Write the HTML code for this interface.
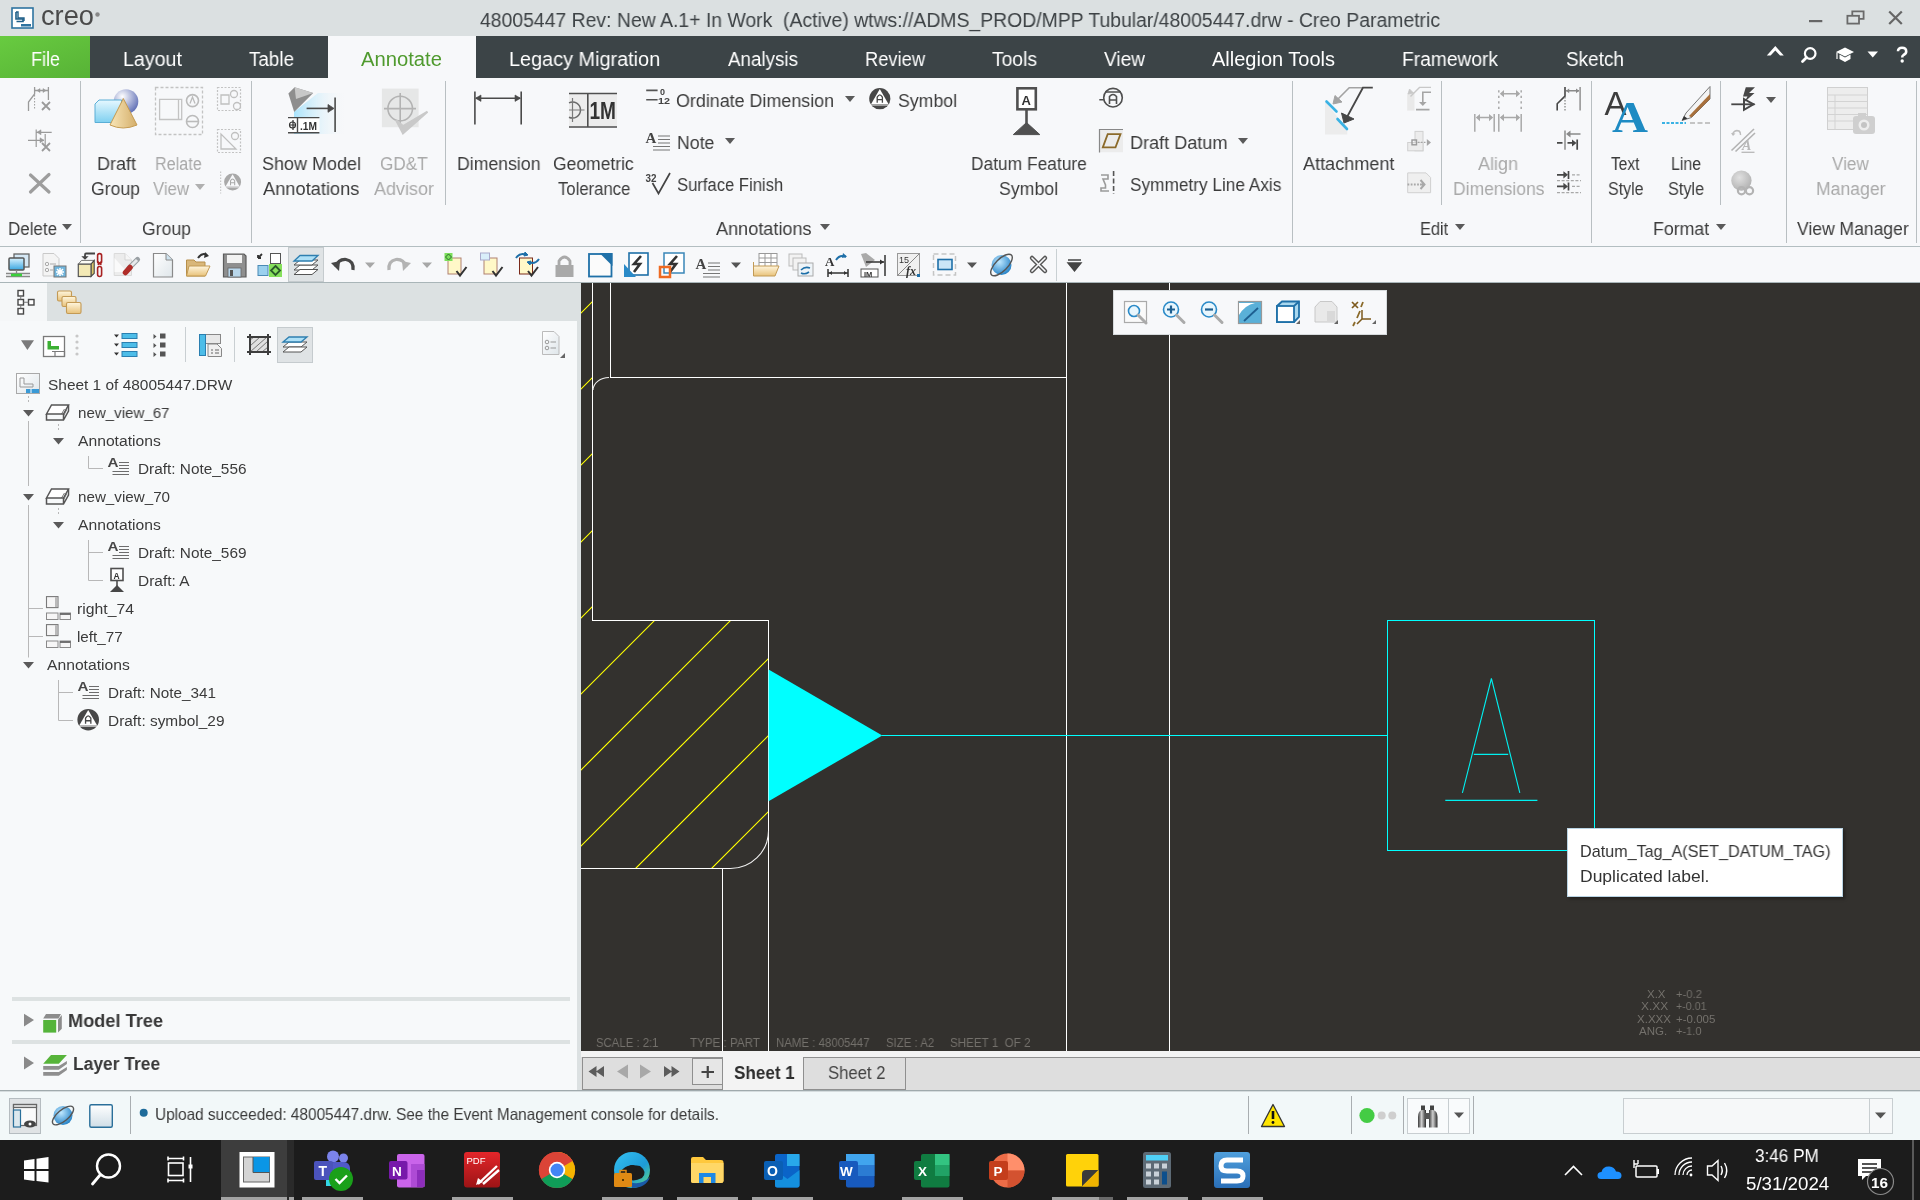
<!DOCTYPE html><html><head><meta charset="utf-8"><style>
html,body{margin:0;padding:0;width:1920px;height:1200px;overflow:hidden;background:#f7f8fa;}
body{position:relative;font-family:"Liberation Sans",sans-serif;}
.t{position:absolute;white-space:pre;line-height:1;transform-origin:0 0;will-change:transform;}
svg{overflow:visible}
</style></head><body>
<div style="position:absolute;left:0px;top:0px;width:1920px;height:36px;background:#dbe0e1;"></div>
<div style="position:absolute;left:0px;top:36px;width:1920px;height:42px;background:#3c4447;"></div>
<div style="position:absolute;left:0px;top:36px;width:90px;height:42px;background:linear-gradient(160deg,#68cb40 0%,#57b236 100%);"></div>
<div style="position:absolute;left:328px;top:36px;width:148px;height:42px;background:#f7f8fa;"></div>
<div style="position:absolute;left:0px;top:78px;width:1920px;height:168px;background:#f7f8fa;"></div>
<div style="position:absolute;left:0px;top:246px;width:1920px;height:1px;background:#b3bec1;"></div>
<div style="position:absolute;left:0px;top:247px;width:1920px;height:35px;background:#f7f8fa;"></div>
<div style="position:absolute;left:0px;top:282px;width:1920px;height:1px;background:#a9b5b8;"></div>
<div style="position:absolute;left:0px;top:283px;width:581px;height:38px;background:#dce1e2;"></div>
<div style="position:absolute;left:0px;top:283px;width:47px;height:38px;background:#f5f7f8;"></div>
<div style="position:absolute;left:0px;top:321px;width:577px;height:769px;background:#f7f9fa;"></div>
<div style="position:absolute;left:577px;top:283px;width:4px;height:807px;background:#dce1e2;"></div>
<div style="position:absolute;left:581px;top:283px;width:1339px;height:768px;background:#33312e;"></div>
<div style="position:absolute;left:581px;top:1051px;width:1339px;height:6px;background:#f3f3f3;"></div>
<div style="position:absolute;left:581px;top:1057px;width:1339px;height:34px;background:#dedede;"></div>
<div style="position:absolute;left:0px;top:1090px;width:1920px;height:50px;background:#f2f8f9;"></div>
<div style="position:absolute;left:0px;top:1140px;width:1920px;height:60px;background:#1c1c1c;"></div>
<span class="t" style="transform:scaleX(0.9695);left:480px;top:10.00px;font-size:20px;color:#3d4245;font-weight:400;">48005447 Rev: New A.1+ In Work  (Active) wtws://ADMS_PROD/MPP Tubular/48005447.drw - Creo Parametric</span>
<span class="t" style="transform:scaleX(0.8997);left:30.5px;top:49.00px;font-size:20px;color:#ffffff;font-weight:400;">File</span>
<span class="t" style="transform:scaleX(0.9823);left:123px;top:49.00px;font-size:20px;color:#ffffff;font-weight:400;">Layout</span>
<span class="t" style="transform:scaleX(0.9412);left:249px;top:49.00px;font-size:20px;color:#ffffff;font-weight:400;">Table</span>
<span class="t" style="transform:scaleX(1.0115);left:361px;top:49.00px;font-size:20px;color:#4f9a2e;font-weight:400;">Annotate</span>
<span class="t" style="transform:scaleX(0.9927);left:509.4px;top:49.00px;font-size:20px;color:#ffffff;font-weight:400;">Legacy Migration</span>
<span class="t" style="transform:scaleX(0.9398);left:728px;top:49.00px;font-size:20px;color:#ffffff;font-weight:400;">Analysis</span>
<span class="t" style="transform:scaleX(0.9149);left:865px;top:49.00px;font-size:20px;color:#ffffff;font-weight:400;">Review</span>
<span class="t" style="transform:scaleX(0.9635);left:992px;top:49.00px;font-size:20px;color:#ffffff;font-weight:400;">Tools</span>
<span class="t" style="transform:scaleX(0.9535);left:1104px;top:49.00px;font-size:20px;color:#ffffff;font-weight:400;">View</span>
<span class="t" style="transform:scaleX(0.9996);left:1212px;top:49.00px;font-size:20px;color:#ffffff;font-weight:400;">Allegion Tools</span>
<span class="t" style="transform:scaleX(0.9599);left:1402px;top:49.00px;font-size:20px;color:#ffffff;font-weight:400;">Framework</span>
<span class="t" style="transform:scaleX(0.9484);left:1566px;top:49.00px;font-size:20px;color:#ffffff;font-weight:400;">Sketch</span>
<svg style="position:absolute;left:11px;top:7px;" width="23" height="22" viewBox="0 0 23 22"><rect x="1" y="1" width="21" height="20" fill="#fff" stroke="#2e73a0" stroke-width="1.6"/><path d="M5 5 V12 H12 V14.5 H5.5" fill="none" stroke="#1f5f88" stroke-width="1.6"/><path d="M5 5 H7 V11 H13 V14" fill="none" stroke="#1f5f88" stroke-width="1.4"/><rect x="10" y="17" width="10" height="2.5" fill="#2e73a0"/></svg>
<span class="t" style="transform:scaleX(1.0089);left:41px;top:3.05px;font-size:27px;color:#4a4a4a;font-weight:400;">creo</span>
<svg style="position:absolute;left:95px;top:12px;" width="5" height="5" viewBox="0 0 5 5"><circle cx="2.5" cy="2.5" r="2.2" fill="#888"/></svg>
<svg style="position:absolute;left:1808px;top:10px;" width="16" height="16" viewBox="0 0 16 16"><rect x="1" y="10" width="13.3" height="2.2" fill="#666"/></svg>
<svg style="position:absolute;left:1846px;top:10px;" width="20" height="16" viewBox="0 0 20 16"><rect x="1.4" y="5.8" width="11.6" height="7.8" fill="none" stroke="#6a6a6a" stroke-width="1.8"/><path d="M6.3 5.8 V1.4 H17.6 V8.8 H13" fill="none" stroke="#6a6a6a" stroke-width="1.8"/></svg>
<svg style="position:absolute;left:1886px;top:10px;" width="18" height="16" viewBox="0 0 18 16"><path d="M3.2 1.5 L15.8 14 M15.8 1.5 L3.2 14" stroke="#666" stroke-width="2.2"/></svg>
<svg style="position:absolute;left:1764px;top:44px;" width="22" height="14" viewBox="0 0 22 14"><path d="M2.8 11.5 L11.3 2 L19.8 11.5 H16 L11.3 6.5 L6.6 11.5 Z" fill="#fff"/></svg>
<svg style="position:absolute;left:1799px;top:46px;" width="20" height="20" viewBox="0 0 20 20"><circle cx="11.2" cy="7.5" r="5.3" fill="none" stroke="#fff" stroke-width="2.2"/><path d="M7.5 11.5 L3.5 15.5" stroke="#fff" stroke-width="2.8" stroke-linecap="round"/></svg>
<svg style="position:absolute;left:1835px;top:46px;" width="22" height="18" viewBox="0 0 22 18"><path d="M1 6 L10 1.5 L19 6 L10 10.5 Z" fill="#fff"/><path d="M4.5 8.5 V13 L10 16 L15.5 13 V8.5 L10 11.5 Z" fill="#fff"/><path d="M2 6.5 V13" stroke="#fff" stroke-width="1.2"/></svg>
<svg style="position:absolute;left:1867px;top:51px;" width="12" height="8" viewBox="0 0 12 8"><path d="M0.5 0.5 H11 L5.75 6.5 Z" fill="#fff"/></svg>
<svg style="position:absolute;left:1895px;top:46px;" width="14" height="18" viewBox="0 0 14 18"><path d="M3 5.2 Q3 1.8 7 1.8 Q11.2 1.8 11.2 5.5 Q11.2 7.8 8.5 9 Q7.2 9.8 7.2 11.5" fill="none" stroke="#fff" stroke-width="2.6"/><circle cx="7.2" cy="15" r="1.7" fill="#fff"/></svg>
<div style="position:absolute;left:80px;top:81px;width:1px;height:162px;background:#b9bfc2;"></div>
<div style="position:absolute;left:251px;top:81px;width:1px;height:162px;background:#b9bfc2;"></div>
<div style="position:absolute;left:445px;top:81px;width:1px;height:124px;background:#b9bfc2;"></div>
<div style="position:absolute;left:1292px;top:81px;width:1px;height:162px;background:#b9bfc2;"></div>
<div style="position:absolute;left:1441px;top:81px;width:1px;height:124px;background:#b9bfc2;"></div>
<div style="position:absolute;left:1591px;top:81px;width:1px;height:162px;background:#b9bfc2;"></div>
<div style="position:absolute;left:1720px;top:81px;width:1px;height:124px;background:#b9bfc2;"></div>
<div style="position:absolute;left:1786px;top:81px;width:1px;height:162px;background:#b9bfc2;"></div>
<div style="position:absolute;left:1916px;top:81px;width:1px;height:162px;background:#b9bfc2;"></div>
<span class="t" style="transform:scaleX(0.9069);left:8px;top:219.60px;font-size:18.7px;color:#3b3b3b;font-weight:400;">Delete</span>
<svg style="position:absolute;left:62px;top:224px;" width="10" height="7" viewBox="0 0 10 7"><path d="M0 0 H10 L5.0 6 Z" fill="#5a5a5a"/></svg>
<span class="t" style="transform:scaleX(0.9432);left:142px;top:219.60px;font-size:18.7px;color:#3b3b3b;font-weight:400;">Group</span>
<span class="t" style="transform:scaleX(0.9686);left:715.6px;top:219.60px;font-size:18.7px;color:#3b3b3b;font-weight:400;">Annotations</span>
<svg style="position:absolute;left:819.6px;top:224px;" width="10" height="7" viewBox="0 0 10 7"><path d="M0 0 H10 L5.0 6 Z" fill="#5a5a5a"/></svg>
<span class="t" style="transform:scaleX(0.8757);left:1419.8px;top:219.60px;font-size:18.7px;color:#3b3b3b;font-weight:400;">Edit</span>
<svg style="position:absolute;left:1455px;top:224px;" width="10" height="7" viewBox="0 0 10 7"><path d="M0 0 H10 L5.0 6 Z" fill="#5a5a5a"/></svg>
<span class="t" style="transform:scaleX(0.9495);left:1652.5px;top:219.60px;font-size:18.7px;color:#3b3b3b;font-weight:400;">Format</span>
<svg style="position:absolute;left:1716px;top:224px;" width="10" height="7" viewBox="0 0 10 7"><path d="M0 0 H10 L5.0 6 Z" fill="#5a5a5a"/></svg>
<span class="t" style="transform:scaleX(0.9377);left:1797px;top:219.60px;font-size:18.7px;color:#3b3b3b;font-weight:400;">View Manager</span>
<span class="t" style="transform:scaleX(0.9630);left:96.5px;top:155.10px;font-size:18.7px;color:#3b3b3b;font-weight:400;">Draft</span>
<span class="t" style="transform:scaleX(0.9432);left:91px;top:179.80px;font-size:18.7px;color:#3b3b3b;font-weight:400;">Group</span>
<span class="t" style="transform:scaleX(0.8643);left:155px;top:155.10px;font-size:18.7px;color:#a9a9a9;font-weight:400;">Relate</span>
<span class="t" style="transform:scaleX(0.8961);left:153px;top:179.80px;font-size:18.7px;color:#a9a9a9;font-weight:400;">View</span>
<svg style="position:absolute;left:195px;top:184px;" width="10" height="7" viewBox="0 0 10 7"><path d="M0 0 H10 L5.0 6 Z" fill="#b0b0b0"/></svg>
<span class="t" style="transform:scaleX(0.9626);left:262.3px;top:155.10px;font-size:18.7px;color:#3b3b3b;font-weight:400;">Show Model</span>
<span class="t" style="transform:scaleX(0.9767);left:263px;top:179.80px;font-size:18.7px;color:#3b3b3b;font-weight:400;">Annotations</span>
<span class="t" style="transform:scaleX(0.9168);left:380px;top:155.10px;font-size:18.7px;color:#a9a9a9;font-weight:400;">GD&amp;T</span>
<span class="t" style="transform:scaleX(0.9626);left:374px;top:179.80px;font-size:18.7px;color:#a9a9a9;font-weight:400;">Advisor</span>
<span class="t" style="transform:scaleX(0.9457);left:456.9px;top:155.10px;font-size:18.7px;color:#3b3b3b;font-weight:400;">Dimension</span>
<span class="t" style="transform:scaleX(0.9362);left:553.3px;top:155.10px;font-size:18.7px;color:#3b3b3b;font-weight:400;">Geometric</span>
<span class="t" style="transform:scaleX(0.8922);left:557.5px;top:179.80px;font-size:18.7px;color:#3b3b3b;font-weight:400;">Tolerance</span>
<span class="t" style="transform:scaleX(0.9573);left:676.2px;top:92.41px;font-size:18.7px;color:#3b3b3b;font-weight:400;">Ordinate Dimension</span>
<svg style="position:absolute;left:845px;top:96px;" width="10" height="7" viewBox="0 0 10 7"><path d="M0 0 H10 L5.0 6 Z" fill="#5a5a5a"/></svg>
<span class="t" style="transform:scaleX(0.9466);left:898.4px;top:92.41px;font-size:18.7px;color:#3b3b3b;font-weight:400;">Symbol</span>
<span class="t" style="transform:scaleX(0.9472);left:676.8px;top:134.10px;font-size:18.7px;color:#3b3b3b;font-weight:400;">Note</span>
<svg style="position:absolute;left:725.4px;top:138px;" width="10" height="7" viewBox="0 0 10 7"><path d="M0 0 H10 L5.0 6 Z" fill="#5a5a5a"/></svg>
<span class="t" style="transform:scaleX(0.8891);left:676.8px;top:176.10px;font-size:18.7px;color:#3b3b3b;font-weight:400;">Surface Finish</span>
<span class="t" style="transform:scaleX(0.9291);left:970.7px;top:155.10px;font-size:18.7px;color:#3b3b3b;font-weight:400;">Datum Feature</span>
<span class="t" style="transform:scaleX(0.9482);left:998.5px;top:179.80px;font-size:18.7px;color:#3b3b3b;font-weight:400;">Symbol</span>
<span class="t" style="transform:scaleX(0.9669);left:1129.6px;top:134.10px;font-size:18.7px;color:#3b3b3b;font-weight:400;">Draft Datum</span>
<svg style="position:absolute;left:1238.4px;top:138px;" width="10" height="7" viewBox="0 0 10 7"><path d="M0 0 H10 L5.0 6 Z" fill="#5a5a5a"/></svg>
<span class="t" style="transform:scaleX(0.9226);left:1129.6px;top:176.10px;font-size:18.7px;color:#3b3b3b;font-weight:400;">Symmetry Line Axis</span>
<span class="t" style="transform:scaleX(0.9679);left:1303px;top:155.10px;font-size:18.7px;color:#3b3b3b;font-weight:400;">Attachment</span>
<span class="t" style="transform:scaleX(0.9624);left:1478px;top:155.10px;font-size:18.7px;color:#a9a9a9;font-weight:400;">Align</span>
<span class="t" style="transform:scaleX(0.9371);left:1452.5px;top:179.80px;font-size:18.7px;color:#a9a9a9;font-weight:400;">Dimensions</span>
<span class="t" style="transform:scaleX(0.8314);left:1610.75px;top:155.10px;font-size:18.7px;color:#3b3b3b;font-weight:400;">Text</span>
<span class="t" style="transform:scaleX(0.8545);left:1607.5px;top:179.80px;font-size:18.7px;color:#3b3b3b;font-weight:400;">Style</span>
<span class="t" style="transform:scaleX(0.8488);left:1670.5px;top:155.10px;font-size:18.7px;color:#3b3b3b;font-weight:400;">Line</span>
<span class="t" style="transform:scaleX(0.8665);left:1667.5px;top:179.80px;font-size:18.7px;color:#3b3b3b;font-weight:400;">Style</span>
<span class="t" style="transform:scaleX(0.9136);left:1832px;top:155.10px;font-size:18.7px;color:#a9a9a9;font-weight:400;">View</span>
<span class="t" style="transform:scaleX(0.9422);left:1816.25px;top:179.80px;font-size:18.7px;color:#a9a9a9;font-weight:400;">Manager</span>
<svg style="position:absolute;left:1766px;top:97px;" width="10" height="7" viewBox="0 0 10 7"><path d="M0 0 H10 L5.0 6 Z" fill="#5a5a5a"/></svg>
<svg style="position:absolute;left:0;top:0" width="1920" height="1200"><path d="M28.5 111 V102 L34.6 94 V87 M48.4 87 V100 M34.6 90.5 H48.4" stroke="#9a9a9a" fill="none" stroke-width="1.3" /><path d="M34.6 95 V110" stroke="#9a9a9a" fill="none" stroke-width="1" stroke-dasharray="1.5 1.5"/><path d="M37 90.5 l3 -2 v4z M46 90.5 l-3 -2 v4z" stroke="#9a9a9a" fill="#9a9a9a" stroke-width="0.5" /><path d="M42 102 L50 110 M50 102 L42 110" stroke="#9a9a9a" fill="none" stroke-width="1.8" /><path d="M36.2 129.5 V147 M36.2 132.3 H51.7 M28 140.3 H44 M45.2 134 V146" stroke="#9a9a9a" fill="none" stroke-width="1.2" /><path d="M37 132.3 l4 -2.5 v5z M44 140.3 l-4 -2.5 v5z" stroke="#9a9a9a" fill="#9a9a9a" stroke-width="0.5" /><path d="M42 143 L50 151 M50 143 L42 151" stroke="#9a9a9a" fill="none" stroke-width="1.8" /><path d="M30.5 175 L49 192 M49 174.5 L30.5 192" stroke="#9d9d9d" fill="none" stroke-width="3.2" stroke-linecap="round"/><defs><linearGradient id="gbox" x1="0" y1="0" x2="0" y2="1"><stop offset="0" stop-color="#e6f8ff"/><stop offset="1" stop-color="#7fd0f0"/></linearGradient><radialGradient id="gsph" cx="0.35" cy="0.3" r="0.8"><stop offset="0" stop-color="#ffffff"/><stop offset="1" stop-color="#5565b0"/></radialGradient><linearGradient id="gcone" x1="0" y1="0" x2="1" y2="0"><stop offset="0" stop-color="#f8e6b8"/><stop offset="1" stop-color="#d4ae6a"/></linearGradient><linearGradient id="gbeam" x1="0" y1="0" x2="1" y2="0"><stop offset="0" stop-color="#9fe0fb"/><stop offset="1" stop-color="#f7f8fa" stop-opacity="0"/></linearGradient></defs><circle cx="126" cy="101.5" r="12.3" fill="url(#gsph)"/><path d="M95 104 L99 100 H121.5 V122.5 H95 Z" fill="url(#gbox)" stroke="#5aaed6" stroke-width="1"/><path d="M123.3 98.5 L137 125 Q123 131 110 125 Z" fill="url(#gcone)" stroke="#c49a50" stroke-width="1"/><path d="M155.5 87.5 H202.5 V134.5 H155.5 Z" stroke="#c3c3c3" fill="none" stroke-width="1.3" stroke-dasharray="3 2"/><path d="M159.6 99.4 H181.7 V119.5 H159.6 Z M178.5 100 V119" stroke="#c3c3c3" fill="none" stroke-width="1.3" /><circle cx="192.5" cy="100.6" r="6" fill="none" stroke="#bbb" stroke-width="1.6"/><circle cx="192.5" cy="121.5" r="6" fill="none" stroke="#bbb" stroke-width="1.6"/><path d="M187 121.5 H198" stroke="#bbb" stroke-width="1.6"/><path d="M190 103.5 L192.5 97 L195 103.5" stroke="#bbb" fill="none" stroke-width="1.3"/><path d="M217.5 87.5 H240.5 V110.5 H217.5 Z M217.5 129.5 H240.5 V152.5 H217.5 Z" stroke="#c3c3c3" fill="none" stroke-width="1.2" stroke-dasharray="2 1.5"/><path d="M221 95 H229 V104 H221 Z M221 134 V149 H236 Z" stroke="#c0c0c0" fill="none" stroke-width="1.3" /><circle cx="234" cy="94" r="3.5" fill="none" stroke="#c0c0c0" stroke-width="1.3"/><circle cx="237" cy="106" r="3.5" fill="none" stroke="#c0c0c0" stroke-width="1.3"/><circle cx="235" cy="136" r="3.5" fill="none" stroke="#c0c0c0" stroke-width="1.3"/><path d="M220.7 171.5 V193.5" stroke="#bdbdbd" fill="none" stroke-width="1" stroke-dasharray="1.5 1.5"/><circle cx="232.6" cy="182" r="8.5" fill="#a9a9a9"/><path d="M232.6 174.30188679245282 L239.6566037735849 186.49056603773585 H225.5433962264151 Z" fill="#f7f8fa"/><path d="M224.18018867924528 187.1320754716981 H241.0198113207547" stroke="#f7f8fa" stroke-width="0.6415094339622642"/><path d="M230.51509433962264 185.20754716981133 V180.79716981132074 Q232.6 177.18867924528303 234.68490566037735 180.79716981132074 V185.20754716981133 M230.51509433962264 182.80188679245282 H234.68490566037735" fill="none" stroke="#a9a9a9" stroke-width="1.0424528301886793"/><path d="M294 112 L318 93 L345 93 L345 134 L294 134 Z" fill="url(#gbeam)" opacity="0.9"/><path d="M288.4 93.5 L294.6 87.3 L313.2 93 L294.2 112.1 Z" fill="#8e8e8e"/><path d="M294.6 87.3 L313.2 93 L296 99 Z" fill="#c8c8c8"/><path d="M306.6 108.4 H330" stroke="#4a4a4a" fill="none" stroke-width="1.6" /><path d="M328 104.5 L334 108.4 L328 112.3 Z" stroke="#4a4a4a" fill="#4a4a4a" stroke-width="0.8" /><path d="M335.1 97.5 V132" stroke="#4a4a4a" fill="none" stroke-width="1.6" /><rect x="288.5" y="118" width="31" height="14.5" fill="#fff"/><path d="M288 117.6 H319.4 M288 132.7 H319.4 M297.5 117.6 V132.7" stroke="#4a4a4a" fill="none" stroke-width="1.4" /><text x="300" y="130" font-family="Liberation Sans" font-weight="bold" font-size="11" fill="#333" textLength="17" lengthAdjust="spacingAndGlyphs">.1M</text><path d="M290 125 h6 M293 120 v10" stroke="#333" fill="none" stroke-width="1.2" /><circle cx="292.5" cy="125" r="3" fill="none" stroke="#333" stroke-width="1.2"/><rect x="381.9" y="88.6" width="36.7" height="38.6" fill="#e6e7e7"/><circle cx="400.2" cy="108.6" r="12.3" fill="none" stroke="#b3b3b3" stroke-width="1.6"/><path d="M384 108.6 H416 M400.2 93 V124" stroke="#b3b3b3" fill="none" stroke-width="1.6" /><path d="M396 120 L403 133.4 L427.5 111.7 L403 126 Z" stroke="#c9c9c9" fill="#c9c9c9" stroke-width="2" /><path d="M474.9 91.5 V124.6 M521.2 91.5 V124.6 M476 98.2 H520" stroke="#4a4a4a" fill="none" stroke-width="1.6" /><path d="M475.5 98.2 L481 95 V101.4 Z M520.5 98.2 L515 95 V101.4 Z" stroke="#4a4a4a" fill="#4a4a4a" stroke-width="0.6" /><rect x="569" y="93" width="48" height="34.4" fill="#ececec"/><path d="M569 93.5 H617 M569 127 H617 M587.8 93 V127.4" stroke="#4f4f4f" fill="none" stroke-width="1.6" /><text x="589.5" y="118.6" font-family="Liberation Sans" font-weight="bold" font-size="23" fill="#333" textLength="26.5" lengthAdjust="spacingAndGlyphs">1M</text><path d="M569 102.8 A8 8 0 1 1 569 117.2" stroke="#6a6a6a" fill="none" stroke-width="1.5" /><path d="M572.5 98 V122 M569 110 H584.5" stroke="#7a7a7a" fill="none" stroke-width="1.2" /><path d="M646.2 90.4 H657.6 M646.2 99.7 H657.6" stroke="#555" fill="none" stroke-width="1.6" /><text x="660" y="95" font-family="Liberation Sans" font-weight="bold" font-size="9" fill="#444">0</text><text x="658" y="104" font-family="Liberation Sans" font-weight="bold" font-size="9" fill="#444" textLength="12" lengthAdjust="spacingAndGlyphs">12</text><text x="645.5" y="143" font-family="Liberation Serif" font-weight="bold" font-size="15" fill="#444">A</text><path d="M658 136 H670 M658 139.5 H670 M658 143 H670 M653 146.5 H670 M653 150 H670" stroke="#777" fill="none" stroke-width="1.2" /><text x="645.5" y="182" font-family="Liberation Sans" font-weight="bold" font-size="10" fill="#444" textLength="11" lengthAdjust="spacingAndGlyphs">32</text><path d="M652.5 183 L658.5 193.5 L670 173" stroke="#444" fill="none" stroke-width="1.7" /><circle cx="879.8" cy="98.7" r="10.6" fill="#474747"/><path d="M879.8 89.10000000000001 L888.5999999999999 104.3 H871.0 Z" fill="#fff"/><path d="M869.3 105.10000000000001 H890.3" stroke="#fff" stroke-width="0.8"/><path d="M877.1999999999999 102.7 V97.2 Q879.8 92.7 882.4 97.2 V102.7 M877.1999999999999 99.7 H882.4" fill="none" stroke="#474747" stroke-width="1.3"/><rect x="1017.4" y="88.3" width="18.4" height="21" fill="#fff" stroke="#505050" stroke-width="2.6"/><text x="1021.5" y="105" font-family="Liberation Sans" font-weight="bold" font-size="13" fill="#333">A</text><path d="M1026.5 110 V124" stroke="#505050" fill="none" stroke-width="2.6" /><path d="M1013.3 134.6 L1026.5 122.5 L1039.8 134.6 Z" stroke="#505050" fill="#505050" stroke-width="1" /><circle cx="1113" cy="97.7" r="9.3" fill="none" stroke="#4f4f4f" stroke-width="1.6"/><path d="M1099.3 99.7 H1104 M1105 92 H1121" stroke="#4f4f4f" fill="none" stroke-width="1.5" /><path d="M1109.5 104 V96.5 Q1113 92.5 1116.5 96.5 V104 M1109.5 100 H1116.5" stroke="#4f4f4f" fill="none" stroke-width="1.6" /><rect x="1099" y="129.2" width="24" height="23" fill="#ececec"/><path d="M1099.5 152.5 V129.5 H1123" stroke="#888" fill="none" stroke-width="1.2" /><path d="M1102.8 147.4 L1107.7 134.1 L1120.5 134.1 L1115.5 147.4 Z" stroke="#8b6a2a" fill="none" stroke-width="1.8" /><path d="M1101 175 H1108 V179 H1103 L1105.5 185 V188 H1101 V191 H1109" stroke="#9a9a9a" fill="none" stroke-width="1.6" /><path d="M1113.6 171 V194" stroke="#555" fill="none" stroke-width="1.6" stroke-dasharray="5 2.5"/><path d="M1325 100.7 L1347.2 129.7 V134.6 H1325 Z" fill="#ececec"/><path d="M1326.5 101.5 L1336.5 111.5 M1337.5 119 L1347 129" stroke="#3ab2e4" fill="none" stroke-width="2.6" stroke-linecap="round"/><path d="M1363 87.7 H1349.2 L1337 100" stroke="#a3a3a3" fill="none" stroke-width="1.6" /><path d="M1333 104 L1335 95.5 L1342 102 Z" stroke="#a3a3a3" fill="#a3a3a3" stroke-width="1" /><path d="M1372.8 87.7 H1362.9 L1346.5 118" stroke="#474747" fill="none" stroke-width="1.8" /><path d="M1341.5 113 L1344 123 L1354 119 Z" stroke="#474747" fill="#474747" stroke-width="1" /><rect x="1407.2" y="93.2" width="7.3" height="17.4" fill="#e9e9e9"/><path d="M1431 87.4 H1419.5 L1410.5 96.5" stroke="#c8c8c8" fill="none" stroke-width="1.4" /><path d="M1408 94 L1409.5 89 L1413.5 93 Z" stroke="#c8c8c8" fill="#c8c8c8" stroke-width="0.8" /><path d="M1431 92.2 H1422.8 V102 M1416 109.6 H1429.5" stroke="#a5a5a5" fill="none" stroke-width="1.6" /><path d="M1419 102 H1426.6 L1422.8 106 Z" stroke="none" fill="#a5a5a5" stroke-width="0" /><rect x="1415" y="131.4" width="8" height="19.4" fill="#ececec" stroke="#d0d0d0"/><rect x="1407.7" y="142.5" width="15.3" height="8.3" fill="#ececec" stroke="#d0d0d0"/><rect x="1412" y="140" width="4.5" height="4.8" fill="none" stroke="#9a9a9a" stroke-width="1.4"/><path d="M1418 142.4 H1427" stroke="#a5a5a5" fill="none" stroke-width="1.3" stroke-dasharray="1.5 1.5"/><path d="M1431 142.4 l-4.2 -3.5 v7z" stroke="none" fill="#a5a5a5" stroke-width="0" /><path d="M1407.7 172.9 H1426 L1430.6 177.5 V192.7 H1407.7 Z" fill="#efefef" stroke="#d0d0d0"/><path d="M1407.5 184.5 H1420" stroke="#a8a8a8" fill="none" stroke-width="1.8" stroke-dasharray="1.8 1.4"/><path d="M1420 184.5 H1424 M1420.5 180 L1424.5 184.5 L1420.5 189" stroke="#a8a8a8" fill="none" stroke-width="2" /><path d="M1474.8 114 V131.7 M1494.2 114 V131.7 M1498.8 114 V131.7 M1521.2 114 V131.7 M1477 117.6 H1492 M1501 117.6 H1519 M1501 93.7 H1519" stroke="#a9a9a9" fill="none" stroke-width="1.5" /><path d="M1498.8 90.3 V111 M1521.2 90.3 V111" stroke="#a9a9a9" fill="none" stroke-width="1.5" stroke-dasharray="2.2 3.3"/><path d="M1475.8 117.6 l4.2 -3.6 v7.2z M1493.2 117.6 l-4.2 -3.6 v7.2z M1499.8 117.6 l4.2 -3.6 v7.2z M1520.2 117.6 l-4.2 -3.6 v7.2z M1499.8 93.7 l4.2 -3.6 v7.2z M1520.2 93.7 l-4.2 -3.6 v7.2z" stroke="none" fill="#a9a9a9" stroke-width="0" /><path d="M1557.2 110.6 V103.8 L1565 96.1 V86.9" stroke="#474747" fill="none" stroke-width="1.6" /><path d="M1565 97 V110.6" stroke="#888" fill="none" stroke-width="1.3" stroke-dasharray="1.6 1.4"/><path d="M1580.1 86.9 V110.6 M1566 90.8 H1579" stroke="#8a8a8a" fill="none" stroke-width="1.4" /><path d="M1566 90.8 l3.2 -2.4 v4.8z M1579.2 90.8 l-3.2 -2.4 v4.8z" stroke="none" fill="#8a8a8a" stroke-width="0" /><path d="M1565 130.4 V149.7 M1580.5 134 H1568" stroke="#8a8a8a" fill="none" stroke-width="1.5" /><path d="M1566 134 l4.5 -3.4 v6.8z" stroke="none" fill="#8a8a8a" stroke-width="0" /><path d="M1557 142.9 H1562.5 M1567.5 142.9 H1574 M1577.2 139.6 V149.7" stroke="#474747" fill="none" stroke-width="1.7" /><path d="M1576.6 142.9 l-4.6 -3.5 v7z" stroke="none" fill="#474747" stroke-width="0" /><path d="M1557 174.8 H1564 M1557 186.4 H1564 M1568.5 171 V179 M1568.5 182.6 V190.6" stroke="#474747" fill="none" stroke-width="1.7" /><path d="M1568 174.8 l-4.6 -3.6 v7.2z M1568 186.4 l-4.6 -3.6 v7.2z" stroke="none" fill="#474747" stroke-width="0" /><path d="M1572 174.8 H1581 M1572 186.4 H1581 M1557 180.6 H1581 M1557 192.7 H1581" stroke="#a8a8a8" fill="none" stroke-width="1.3" stroke-dasharray="3 1.6"/><text x="1604.5" y="114.6" font-family="Liberation Sans" font-size="34" fill="#3d3d3d" textLength="22" lengthAdjust="spacingAndGlyphs">A</text><text x="1612" y="131.5" font-family="Liberation Serif" font-weight="bold" font-size="44" fill="#1e8bc3" textLength="36" lengthAdjust="spacingAndGlyphs">A</text><path d="M1662 123 H1686" stroke="#3ab2e4" fill="none" stroke-width="2.2" stroke-dasharray="3 1.5"/><path d="M1690 123 H1710" stroke="#c4c4c4" fill="none" stroke-width="2.2" stroke-dasharray="5 2.5"/><path d="M1682 120.5 L1686 113 L1710 86.5 V99 L1691.5 117.5 Z" fill="#f4f4f4" stroke="#777" stroke-width="1"/><path d="M1691.5 117.5 L1710 99 V94 L1689 116 Z" fill="#a8703c"/><path d="M1682 120.5 L1684 116 L1687.5 118.5 Z" fill="#333"/><path d="M1731.3 104.3 H1754.5" stroke="#474747" fill="none" stroke-width="1.8" /><path d="M1744 99 L1753.5 104.3 L1744 109.8 Z" stroke="#474747" fill="none" stroke-width="2" /><path d="M1745.8 87.2 H1755 L1749 93 H1754.5 L1744 102.5 L1747.5 96.5 H1743 Z" stroke="none" fill="#474747" stroke-width="0" /><path d="M1731.5 150.5 L1754 129 M1735.5 151.5 L1755 133" stroke="#b3b3b3" fill="none" stroke-width="1.6" /><text x="1742" y="150" font-family="Liberation Serif" font-style="italic" font-weight="bold" font-size="14" fill="#b8b8b8">A</text><path d="M1741.5 152.3 H1754.5" stroke="#b8b8b8" fill="none" stroke-width="1.3" /><path d="M1732.5 134.5 Q1734 129.5 1739 131 Q1741 132.5 1740.5 135" stroke="#bdbdbd" fill="none" stroke-width="1.6" /><path d="M1731 133 L1733 136 L1735.5 133.5 Z" stroke="none" fill="#bdbdbd" stroke-width="0" /><defs><radialGradient id="gsph2" cx="0.4" cy="0.35" r="0.7"><stop offset="0" stop-color="#e0e0e0"/><stop offset="1" stop-color="#b0b0b0"/></radialGradient></defs><circle cx="1741.4" cy="180.6" r="10.2" fill="url(#gsph2)"/><circle cx="1741.5" cy="190.8" r="3.6" fill="none" stroke="#b3b3b3" stroke-width="2.2"/><circle cx="1749.5" cy="190.8" r="3.6" fill="none" stroke="#b3b3b3" stroke-width="2.2"/><rect x="1827.5" y="87.5" width="40" height="42" fill="#ededed" stroke="#d0d0d0"/><path d="M1827.5 95 H1867.5 M1827.5 101.5 H1867.5 M1827.5 108 H1867.5 M1827.5 114.5 H1867.5 M1827.5 121 H1867.5 M1835 95 V129.5" stroke="#d3d3d3" fill="none" stroke-width="1" /><rect x="1853" y="116" width="22" height="18" rx="3" fill="#cfcfcf"/><circle cx="1864" cy="125" r="5.5" fill="#ededed"/><circle cx="1864" cy="125" r="3" fill="#c4c4c4"/><rect x="1858" y="113" width="8" height="4" fill="#cfcfcf"/></svg>
<div style="position:absolute;left:288px;top:247px;width:36px;height:35px;background:#dfe3e5;border:1px solid #c5cbce;box-sizing:border-box"></div>
<div style="position:absolute;left:1056px;top:249px;width:1px;height:32px;background:#c9d0d3;"></div>
<svg style="position:absolute;left:0;top:0" width="1920" height="1200"><defs><linearGradient id="gscr" x1="0" y1="0" x2="0" y2="1"><stop offset="0" stop-color="#d8f2ff"/><stop offset="1" stop-color="#3aa6e0"/></linearGradient><linearGradient id="gfold" x1="0" y1="0" x2="0" y2="1"><stop offset="0" stop-color="#fff6de"/><stop offset="1" stop-color="#e8c27a"/></linearGradient><linearGradient id="gdoc" x1="0" y1="0" x2="1" y2="1"><stop offset="0" stop-color="#ffffff"/><stop offset="1" stop-color="#dfe6ea"/></linearGradient><radialGradient id="gglobe" cx="0.4" cy="0.35" r="0.7"><stop offset="0" stop-color="#bfe8ff"/><stop offset="1" stop-color="#1f7fc6"/></radialGradient></defs><rect x="14" y="254" width="15" height="13" fill="#d5e8f5" stroke="#666" stroke-width="1.3"/><rect x="9" y="258" width="15" height="12" rx="1" fill="url(#gscr)" stroke="#555" stroke-width="1.5"/><path d="M16.5 270 V274 M6 273.5 H30 M6 276.5 H30" stroke="#888" stroke-width="1.3"/><path d="M11 275 H22" stroke="#3ad13a" stroke-width="2.6"/><path d="M43 253.5 H54 L59 258.5 V276 H43 Z" fill="#f4f4f4" stroke="#c9c9c9"/><circle cx="47" cy="264" r="1.7" fill="none" stroke="#aaa"/><circle cx="47" cy="270" r="1.7" fill="none" stroke="#aaa"/><path d="M50 264 H56 M50 270 H53" stroke="#aaa"/><rect x="54" y="266" width="12" height="11" fill="#6fb4dc" stroke="#777"/><path d="M57 269 L63 275 M63 269 L57 275 M60 268 V276 M56 272 H64" stroke="#fff" stroke-width="1.5"/><path d="M78.3 264.2 L81.5 260.4 H94.2 L91 264.2 Z" fill="#fbfbf5" stroke="#666" stroke-width="0.9"/><path d="M91 264.2 L94.2 260.4 V273.3 L91 276.5 Z" fill="#d9c66a" stroke="#444" stroke-width="1.1"/><rect x="78.3" y="264.2" width="12.7" height="12.3" fill="#f3e9b5" stroke="#555" stroke-width="1.2"/><path d="M95 253.5 H86 Q85 253.5 85 255 V259" stroke="#444" stroke-width="1.8" fill="none"/><path d="M81.3 256.2 H88.6 L85 259.8 Z" fill="#444"/><rect x="97.6" y="253.6" width="4" height="10" rx="2" fill="none" stroke="#a82222" stroke-width="1.6"/><rect x="97.6" y="266.5" width="4" height="10" rx="2" fill="none" stroke="#a82222" stroke-width="1.6"/><path d="M97.8 261.5 L101.4 265 M101.4 261.5 L97.8 265" stroke="#a82222" stroke-width="1.2"/><path d="M114.2 253.5 H125 L131.5 260 V275.5 H114.2 Z" fill="#ececec" stroke="#dadada"/><path d="M114.5 258 L127 272 H114.5 Z" fill="#fafafa"/><path d="M125 253.5 V260 H131.5" fill="#f6f6f6" stroke="#d5d5d5"/><path d="M137.5 259.5 L129 268" stroke="#9aa0a4" stroke-width="5.2" stroke-linecap="round"/><path d="M137 260 L129.5 267.5" stroke="#e8eaec" stroke-width="3"/><path d="M130 267.5 L125.5 272.5" stroke="#b02c28" stroke-width="5.5" stroke-linecap="round"/><path d="M153.5 253.5 H166 L172.5 260 V277 H153.5 Z" fill="url(#gdoc)" stroke="#8a8a8a" stroke-width="1.2"/><path d="M166 253.5 V260 H172.5" fill="#cfe3ef" stroke="#8a8a8a" stroke-width="1"/><path d="M186.5 260 H194 L196 262 H205 V276 H186.5 Z" fill="#d9b77a" stroke="#b78f4a"/><path d="M189 266 H210 L205.5 276 H186.5 Z" fill="url(#gfold)" stroke="#c29a55"/><path d="M198 258 Q202 252 207 255" stroke="#333" stroke-width="2" fill="none"/><path d="M205 252 L209 256 L204 258 Z" fill="#333"/><path d="M223.5 254 H244 L246 256 V277 H223.5 Z" fill="#8f8f8f" stroke="#5c5c5c" stroke-width="1.2"/><rect x="227" y="255" width="15" height="8" fill="#f2f2f2"/><rect x="228" y="268" width="13" height="9" fill="#b9d6ea" stroke="#666" stroke-width="0.8"/><rect x="230" y="270" width="3" height="6" fill="#555"/><path d="M262 254 L258 258 M258 258 V255 M258 258 H261" stroke="#333" stroke-width="1.8" fill="none"/><rect x="270.5" y="253.5" width="10" height="10" fill="#fff" stroke="#555"/><rect x="258" y="265.5" width="10" height="10" fill="#9ad0ee" stroke="#4a8ab5"/><rect x="269" y="264" width="13" height="13" fill="#86e05c"/><path d="M275.5 266 L280 270.5 L275.5 275 L271 270.5 Z" stroke="#2a5a2a" fill="none" stroke-width="1.8"/><path d="M294 270 L300 265 H318 L312 270 Z" fill="#fff" stroke="#555"/><path d="M294 274.5 L300 269.5 H318 L312 274.5 Z" fill="#fff" stroke="#555"/><path d="M294 265 L300 260 H318 L312 265 Z" fill="#fff" stroke="#555"/><path d="M294 261 L300 255.5 H318 L312 261 Z" fill="#aee0f7" stroke="#2f7fb0" stroke-width="1.3"/><path d="M336 267 Q338 259 346 259.5 Q354 261 353 270" stroke="#474747" stroke-width="3.2" fill="none"/><path d="M331 263 L339 271 L340 261 Z" fill="#474747"/><path d="M365 262.5 H375 L370 268 Z M422 262.5 H432 L427 268 Z" fill="#a7a7a7"/><path d="M406 267 Q404 259 396 259.5 Q388 261 389 270" stroke="#b3b3b3" stroke-width="3.2" fill="none"/><path d="M411 263 L403 271 L402 261 Z" fill="#b3b3b3"/><rect x="448.0" y="258" width="13" height="16" fill="#fff8c8" stroke="#b08070" stroke-width="1"/><path d="M456.5 271 L460.0 275.5 L466.5 267" stroke="#333" stroke-width="2" fill="none"/><rect x="484.0" y="258" width="13" height="16" fill="#fff8c8" stroke="#b08070" stroke-width="1"/><path d="M492.5 271 L496.0 275.5 L502.5 267" stroke="#333" stroke-width="2" fill="none"/><rect x="519.5" y="258" width="13" height="16" fill="#fff8c8" stroke="#7a2a1a" stroke-width="1"/><path d="M528 271 L531.5 275.5 L538 267" stroke="#333" stroke-width="2" fill="none"/><rect x="444.5" y="253" width="8" height="8" fill="#7de05c"/><path d="M448.5 254 L451.5 257 L448.5 260 L445.5 257 Z" stroke="#2a6a2a" fill="none"/><rect x="480.5" y="253" width="9" height="7" fill="#d9eefa" stroke="#aac"/><path d="M516 258 Q520 252 527 255 M539 259 Q535 265 528 262" stroke="#1e6fa8" stroke-width="2" fill="none"/><path d="M525 252 l3 3 l-4 1z M530 265 l-3 -3 l4 -1z" fill="#1e6fa8" stroke="#1e6fa8"/><rect x="555.5" y="265" width="18" height="12" fill="#a9a9a9"/><path d="M559 265 V261 Q564.5 253 570 261 V265" stroke="#a9a9a9" stroke-width="2.8" fill="none"/><rect x="589" y="254" width="22.5" height="22.5" fill="#fbfbfb" stroke="#1f70a8" stroke-width="1.8"/><path d="M599.5 253 H612.5 V266 Z" fill="#1f70a8"/><rect x="629" y="253" width="19" height="22" fill="#fff" stroke="#1f70a8" stroke-width="1.6"/><path d="M624 264 V277 H636 Z" fill="#2a8ac8"/><path d="M641 256 L634 264 H640 L634 272" stroke="#333" stroke-width="2.6" fill="none"/><rect x="664" y="253" width="20" height="20" fill="#fff" stroke="#3a86b8" stroke-width="1.5"/><path d="M677 256 L670 264 H676 L670 272" stroke="#333" stroke-width="2.6" fill="none"/><rect x="660" y="267" width="10" height="10" fill="none" stroke="#ee6a22" stroke-width="2.5"/><text x="695.5" y="269" font-family="Liberation Serif" font-weight="bold" font-size="15" fill="#444">A</text><path d="M708 263 H720 M708 266.5 H720 M708 270 H720 M703 273.5 H720 M703 277 H720" stroke="#777" stroke-width="1.2"/><path d="M731 262.5 H741 L736 268 Z M967 262.5 H977 L972 268 Z" fill="#555"/><rect x="759" y="253.5" width="18" height="14" fill="#fff" stroke="#999"/><path d="M759 258 H777 M759 262.5 H777 M765 253.5 V267 M771 253.5 V267" stroke="#999"/><path d="M753.5 266 H779 L775 276 H753.5 Z" fill="url(#gfold)" stroke="#c29a55"/><path d="M753.5 262 V276" stroke="#c29a55"/><rect x="789" y="254" width="13" height="12" fill="#f2f2f2" stroke="#bbb"/><rect x="793" y="258" width="13" height="12" fill="#f2f2f2" stroke="#bbb"/><rect x="798" y="263" width="15" height="13" fill="#eef4f8" stroke="#aaa"/><path d="M801 270 Q805 266 810 268 M809 272 Q805 275 801 273" stroke="#1e6fa8" stroke-width="1.6" fill="none"/><text x="825" y="266" font-family="Liberation Serif" font-weight="bold" font-size="13" fill="#333">A</text><path d="M836 260 Q840 254 846 257" stroke="#1e6fa8" stroke-width="2" fill="none"/><path d="M843 253 l4 3.5 l-5 1.5z" fill="#1e6fa8"/><path d="M828 273 H848 M828 269 V277 M848 269 V277" stroke="#333" stroke-width="1.5"/><path d="M829 273 l3 -2 v4z M847 273 l-3 -2 v4z" fill="#333"/><path d="M861 254 L866 253 L875 260 L866 267 Z" fill="#aaa"/><path d="M866 262 H884 M885 255 V276" stroke="#333" stroke-width="1.5"/><path d="M884 262 l-4 -2.5 v5z" fill="#333"/><rect x="861" y="269" width="17" height="8" fill="#fff" stroke="#555"/><text x="864" y="276.5" font-family="Liberation Sans" font-weight="bold" font-size="7.5" fill="#333">IM</text><rect x="897.5" y="253.5" width="22" height="22" fill="#f0f0f0" stroke="#999"/><path d="M897.5 275.5 L919.5 253.5" stroke="#888"/><text x="899" y="263" font-family="Liberation Sans" font-size="9" fill="#333">15</text><text x="906" y="275" font-family="Liberation Serif" font-style="italic" font-weight="bold" font-size="12" fill="#333">fx</text><rect x="917" y="274" width="3" height="3" fill="#1f70a8"/><rect x="933.5" y="254" width="22" height="21" fill="none" stroke="#c5c5c5" stroke-width="1.5" stroke-dasharray="5 3"/><rect x="938" y="259.5" width="14" height="10" fill="#cbe6f7" stroke="#1f70a8" stroke-width="1.6"/><circle cx="1001.5" cy="265" r="10" fill="url(#gglobe)"/><ellipse cx="1001.5" cy="265" rx="14" ry="6" transform="rotate(-45 1001.5 265)" fill="none" stroke="#555" stroke-width="1.4"/><path d="M1032 258 L1045 271 M1045 258 L1032 271" stroke="#555" stroke-width="4.5" stroke-linecap="round"/><path d="M1032 258 L1045 271 M1045 258 L1032 271" stroke="#f7f8fa" stroke-width="1.6" stroke-linecap="round"/><path d="M1068 260 H1081 M1068 263 H1081 L1074.5 271 Z" stroke="#444" fill="#444" stroke-width="1.4"/></svg>
<div style="position:absolute;left:277px;top:327px;width:36px;height:36px;background:#dfe3e5;border:1px solid #c5cbce;box-sizing:border-box"></div>
<div style="position:absolute;left:185px;top:327px;width:1px;height:35px;background:#c9cfd2;"></div>
<div style="position:absolute;left:234px;top:327px;width:1px;height:35px;background:#c9cfd2;"></div>
<span class="t" style="transform:scaleX(1.0163);left:47.5px;top:377.08px;font-size:15.2px;color:#3b3b3b;font-weight:400;">Sheet 1 of 48005447.DRW</span>
<span class="t" style="transform:scaleX(0.9942);left:77.5px;top:405.08px;font-size:15.2px;color:#3b3b3b;font-weight:400;">new_view_67</span>
<span class="t" style="transform:scaleX(1.0322);left:77.5px;top:433.08px;font-size:15.2px;color:#3b3b3b;font-weight:400;">Annotations</span>
<span class="t" style="transform:scaleX(1.0119);left:137.8px;top:461.08px;font-size:15.2px;color:#3b3b3b;font-weight:400;">Draft: Note_556</span>
<span class="t" style="transform:scaleX(0.9975);left:77.5px;top:489.08px;font-size:15.2px;color:#3b3b3b;font-weight:400;">new_view_70</span>
<span class="t" style="transform:scaleX(1.0322);left:77.5px;top:517.08px;font-size:15.2px;color:#3b3b3b;font-weight:400;">Annotations</span>
<span class="t" style="transform:scaleX(1.0119);left:137.8px;top:545.08px;font-size:15.2px;color:#3b3b3b;font-weight:400;">Draft: Note_569</span>
<span class="t" style="transform:scaleX(1.0167);left:137.8px;top:573.08px;font-size:15.2px;color:#3b3b3b;font-weight:400;">Draft: A</span>
<span class="t" style="transform:scaleX(1.0384);left:77.4px;top:601.08px;font-size:15.2px;color:#3b3b3b;font-weight:400;">right_74</span>
<span class="t" style="transform:scaleX(0.9976);left:77.4px;top:629.08px;font-size:15.2px;color:#3b3b3b;font-weight:400;">left_77</span>
<span class="t" style="transform:scaleX(1.0322);left:47.3px;top:657.08px;font-size:15.2px;color:#3b3b3b;font-weight:400;">Annotations</span>
<span class="t" style="transform:scaleX(1.0073);left:107.6px;top:685.08px;font-size:15.2px;color:#3b3b3b;font-weight:400;">Draft: Note_341</span>
<span class="t" style="transform:scaleX(1.0148);left:107.6px;top:713.08px;font-size:15.2px;color:#3b3b3b;font-weight:400;">Draft: symbol_29</span>
<div style="position:absolute;left:12px;top:997px;width:558px;height:4px;background:#dde2e2;"></div>
<div style="position:absolute;left:12px;top:1040px;width:558px;height:4px;background:#dde2e2;"></div>
<span class="t" style="transform:scaleX(0.9683);left:67.7px;top:1012.22px;font-size:18.8px;color:#383838;font-weight:700;">Model Tree</span>
<span class="t" style="transform:scaleX(0.9278);left:72.5px;top:1054.72px;font-size:18.8px;color:#383838;font-weight:700;">Layer Tree</span>
<svg style="position:absolute;left:0;top:0" width="1920" height="1200"><g stroke="#474747" stroke-width="1.4" fill="#fff"><rect x="18" y="290.5" width="5.5" height="5.5"/><rect x="18" y="299.5" width="5.5" height="5.5"/><rect x="28.5" y="299.5" width="5.5" height="5.5"/><rect x="18" y="308.5" width="5.5" height="5.5"/></g><path d="M20.75 296 V299.5 M20.75 305 V308.5 M23.5 302.25 H28.5" stroke="#777" stroke-width="1"/><g fill="url(#gfold)" stroke="#c39a55" stroke-width="1.1"><rect x="57.5" y="291" width="14" height="10" rx="1.5"/><rect x="62" y="296.5" width="14" height="10" rx="1.5"/><rect x="66.5" y="302.5" width="14.5" height="11" rx="1.5"/></g><path d="M21 340.3 H34 L27.4 350 Z" fill="#7a7a7a"/><rect x="43.5" y="336.5" width="21" height="20" fill="#fff" stroke="#7a7a7a" stroke-width="1.3"/><path d="M47.5 341 H51 V346 H59 V349.5 H47.5 Z" fill="#3cb034"/><path d="M52 351.5 H64.5 V356.5 M55 351.5 V356.5" stroke="#7a7a7a" fill="none" stroke-width="1.2"/><g fill="#c8c8c8"><circle cx="77" cy="336" r="1.6"/><circle cx="77" cy="342" r="1.6"/><circle cx="77" cy="348" r="1.6"/><circle cx="77" cy="354" r="1.6"/></g><g fill="#4dbde8" stroke="#2a7fb0" stroke-width="1"><rect x="122" y="333.5" width="15" height="5"/><rect x="122" y="342.5" width="15" height="5"/><rect x="122" y="351.5" width="15" height="5"/></g><path d="M114 334.5 h5 l-2.5 3z M114 343.5 h5 l-2.5 3z M114 352.5 h5 l-2.5 3z" fill="#333"/><g fill="#555"><rect x="160" y="333.5" width="5.5" height="5"/><rect x="160" y="342.5" width="5.5" height="5"/><rect x="160" y="351.5" width="5.5" height="5"/><path d="M153.5 334 v5 l3 -2.5z M153.5 343 v5 l3 -2.5z M153.5 352 v5 l3 -2.5z"/></g><rect x="199.5" y="334.5" width="21" height="9" fill="#e8e8e8" stroke="#888"/><rect x="199.5" y="334.5" width="6" height="21" fill="#4dbde8" stroke="#2a7fb0"/><path d="M208 344 H217 L221.5 348.5 V356.5 H208 Z" fill="#f0f0f0" stroke="#888"/><path d="M211 350 h2 M215 350 h4 M211 353 h2 M215 353 h4" stroke="#666"/><rect x="250" y="337" width="18" height="15" fill="#e0e0e0"/><path d="M250 340 l4 -3 M250 346 l10 -9 M250 352 l17 -15 M256 352 l12 -11 M262 352 l6 -5" stroke="#777" stroke-width="1"/><path d="M247 337 H271 M247 352 H271 M250 334 V355 M268 334 V355" stroke="#3d3d3d" stroke-width="2"/><path d="M283 347 L289 342 H307 L301 347 Z" fill="#fff" stroke="#555"/><path d="M283 352 L289 347 H307 L301 352 Z" fill="#fff" stroke="#555"/><path d="M283 342 L289 337 H307 L301 342 Z" fill="#aee0f7" stroke="#2f7fb0" stroke-width="1.3"/><path d="M542.5 331.5 H554 L559 336.5 V354.5 H542.5 Z" fill="url(#gdoc)" stroke="#bbb"/><circle cx="547" cy="342" r="1.8" fill="none" stroke="#999"/><circle cx="547" cy="348" r="1.8" fill="none" stroke="#999"/><path d="M550.5 342 H556 M550.5 348 H556" stroke="#999" stroke-width="1.2"/><path d="M565 353 V358 H560 Z" fill="#666"/><rect x="16.5" y="373.5" width="23" height="20" fill="url(#gdoc)" stroke="#a9a9a9"/><path d="M20 378 H24 V384 H33 V387 H20 Z" fill="none" stroke="#999" stroke-width="1"/><rect x="26" y="389" width="13" height="4" fill="#3a9ad6"/><path d="M31 389 V393" stroke="#fff"/><path d="M46.5 414 L51.5 405 H68.5 L63.5 414 Z" fill="#fff" stroke="#555" stroke-width="1.5"/><path d="M46.5 414 V420 H63.5 L68.5 411 V405 M63.5 414 V420" fill="none" stroke="#555" stroke-width="1.5"/><path d="M64.5 409 L61.5 414 M66.5 410 L63.5 416" stroke="#555" stroke-width="0.8"/><path d="M46.5 498 L51.5 489 H68.5 L63.5 498 Z" fill="#fff" stroke="#555" stroke-width="1.5"/><path d="M46.5 498 V504 H63.5 L68.5 495 V489 M63.5 498 V504" fill="none" stroke="#555" stroke-width="1.5"/><path d="M64.5 493 L61.5 498 M66.5 494 L63.5 500" stroke="#555" stroke-width="0.8"/><text x="107.5" y="466.5" font-family="Liberation Sans" font-weight="bold" font-size="13" fill="#474747" textLength="11" lengthAdjust="spacingAndGlyphs">A</text><path d="M119 462.5 H129 M119 465.5 H129 M119 468.5 H129 M112.5 471.5 H129 M112.5 474.5 H129" stroke="#6d6d6d" stroke-width="1.2"/><text x="107.5" y="550.5" font-family="Liberation Sans" font-weight="bold" font-size="13" fill="#474747" textLength="11" lengthAdjust="spacingAndGlyphs">A</text><path d="M119 546.5 H129 M119 549.5 H129 M119 552.5 H129 M112.5 555.5 H129 M112.5 558.5 H129" stroke="#6d6d6d" stroke-width="1.2"/><text x="77.5" y="690.5" font-family="Liberation Sans" font-weight="bold" font-size="13" fill="#474747" textLength="11" lengthAdjust="spacingAndGlyphs">A</text><path d="M89 686.5 H99 M89 689.5 H99 M89 692.5 H99 M82.5 695.5 H99 M82.5 698.5 H99" stroke="#6d6d6d" stroke-width="1.2"/><rect x="111" y="568.5" width="12" height="12" fill="#fff" stroke="#4f4f4f" stroke-width="1.6"/><text x="113.5" y="578.5" font-family="Liberation Sans" font-weight="bold" font-size="8.5" fill="#333">A</text><path d="M117 580.5 V586" stroke="#4f4f4f" stroke-width="1.6"/><path d="M110 592 L117 585 L124 592 Z" fill="#474747"/><rect x="46.5" y="596.6" width="11.5" height="11" fill="#f6f6f6" stroke="#7a7a7a" stroke-width="1.1"/><path d="M56 597.2 V607" stroke="#999" stroke-width="1.3"/><rect x="46.5" y="613" width="11.5" height="6.5" fill="#f6f6f6" stroke="#8a8a8a"/><rect x="60" y="613" width="10.5" height="6.5" fill="#f6f6f6" stroke="#8a8a8a"/><path d="M60 614 H70.5" stroke="#666" stroke-width="1.8"/><rect x="46.5" y="624.6" width="11.5" height="11" fill="#f6f6f6" stroke="#7a7a7a" stroke-width="1.1"/><path d="M56 625.2 V635" stroke="#999" stroke-width="1.3"/><rect x="46.5" y="641" width="11.5" height="6.5" fill="#f6f6f6" stroke="#8a8a8a"/><rect x="60" y="641" width="10.5" height="6.5" fill="#f6f6f6" stroke="#8a8a8a"/><path d="M60 642 H70.5" stroke="#666" stroke-width="1.8"/><circle cx="88.2" cy="719.7" r="10.8" fill="#474747"/><path d="M88.2 709.9188679245284 L97.16603773584906 725.4056603773586 H79.23396226415095 Z" fill="#fff"/><path d="M77.50188679245284 726.2207547169812 H98.89811320754717" stroke="#fff" stroke-width="0.8150943396226416"/><path d="M85.55094339622642 723.7754716981133 V718.1716981132076 Q88.2 713.5867924528302 90.84905660377359 718.1716981132076 V723.7754716981133 M85.55094339622642 720.7188679245284 H90.84905660377359" fill="none" stroke="#474747" stroke-width="1.3245283018867926"/><path d="M23 410 H34 L28.5 416.5 Z" fill="#5a5a5a"/><path d="M23 494 H34 L28.5 500.5 Z" fill="#5a5a5a"/><path d="M53 438 H64 L58.5 444.5 Z" fill="#5a5a5a"/><path d="M53 522 H64 L58.5 528.5 Z" fill="#5a5a5a"/><path d="M23 662 H34 L28.5 668.5 Z" fill="#5a5a5a"/><g stroke="#b8b8b8" stroke-width="1" fill="none"><path d="M28.5 396 V404" stroke-dasharray="2 2"/><path d="M28.5 421 V486 M28.5 505 V657.5 M28.5 608.5 H43 M28.5 636.5 H43"/><path d="M58.5 424 V432" stroke-dasharray="2 2"/><path d="M58.5 508 V516" stroke-dasharray="2 2"/><path d="M88.5 456 V468.5 H103"/><path d="M88.5 540 V580.5 H103 M88.5 552.5 H103"/><path d="M58.5 680 V720.5 H73 M58.5 692.5 H73"/></g><path d="M24 1013.7 L34 1020 L24 1026.5 Z M24 1056.5 L34 1063 L24 1069.5 Z" fill="#8a8a8a"/><path d="M43.2 1018.5 L46 1014 H61 L58.5 1018.5 Z" fill="#8c8c8c"/><path d="M58 1019.5 L61.8 1015 V1028.7 L58 1032.6 Z" fill="#8c8c8c"/><rect x="43.2" y="1020" width="13" height="12.6" fill="#54b43a"/><path d="M43.2 1072 H58.8 L66.9 1067 V1070 L58.8 1075.8 H43.2 Z" fill="#8f8f8f"/><path d="M43.2 1066 H58.8 L66.9 1061 V1064 L58.8 1069.8 H43.2 Z" fill="#8f8f8f"/><path d="M43.2 1063.8 L51 1055.1 H66.9 L58.8 1063.8 Z" fill="#57b43a"/></svg>
<svg style="position:absolute;left:0;top:0" width="1920" height="1200"><defs><clipPath id="cv"><rect x="581" y="283" width="1339" height="768"/></clipPath><clipPath id="hatch"><path d="M581 283 H592.5 V620.5 H768.6 V831 A38 38 0 0 1 730.6 868.5 H581 Z"/></clipPath></defs><g clip-path="url(#cv)"><g clip-path="url(#hatch)"><path d="M694 200 L-206 1100 M770 200 L-130 1100 M846 200 L-54 1100 M923 200 L23 1100 M999 200 L99 1100 M1075 200 L175 1100 M1151 200 L251 1100 M1227 200 L327 1100 M1304 200 L404 1100 M1380 200 L480 1100" stroke="#ffff00" stroke-width="1.15" fill="none"/></g><g stroke="#ffffff" stroke-width="1" fill="none" shape-rendering="crispEdges"><path d="M592.5 283 V620.5 H768.5 V1051"/><path d="M610.5 283 V377.5 H1066"/><path d="M1066.5 283 V1051 M1169.5 283 V1051"/><path d="M581 868.5 H730"/><path d="M722.5 868.5 V1051"/></g><g stroke="#f0f0f0" stroke-width="1.1" fill="none"><path d="M593 390 A16 13 0 0 1 609 377.5"/><path d="M730 868.5 A38 38 0 0 0 768.5 831"/></g><path d="M768.6 669.6 L882.3 735.4 L768.6 801.2 Z" fill="#00ffff"/><path d="M882 735.5 H1387.5" stroke="#00ffff" stroke-width="1" shape-rendering="crispEdges"/><rect x="1387.5" y="620.5" width="207" height="230" fill="none" stroke="#00ffff" stroke-width="1" shape-rendering="crispEdges"/><path d="M1462.4 792.8 L1491.4 678.5 L1519.8 792.8 M1473.8 754.4 H1508.2 M1445.3 800.4 H1537.4" stroke="#00f0f0" stroke-width="1.1" fill="none"/></g></svg>
<div style="position:absolute;left:1113px;top:290px;width:274px;height:45px;background:#f7f8fa;border:1px solid #d6dadc;box-sizing:border-box"></div>
<svg style="position:absolute;left:0;top:0" width="1920" height="1200"><rect x="1124.5" y="301.5" width="22" height="21" fill="#fafafa" stroke="#aaa" stroke-width="1.2"/><circle cx="1134" cy="311" r="5.5" fill="#e8f6fd" stroke="#2a8ac8" stroke-width="1.6"/><path d="M1138 315 L1146 323" stroke="#aaa" stroke-width="3" stroke-linecap="round"/><circle cx="1171" cy="309.5" r="7.5" fill="#e8f6fd" stroke="#2a8ac8" stroke-width="1.6"/><path d="M1176.5 315 L1184 322.5" stroke="#aaa" stroke-width="3" stroke-linecap="round"/><path d="M1167 309.5 H1175 M1171 305.5 V313.5" stroke="#1e5f90" stroke-width="2.2"/><circle cx="1209" cy="309.5" r="7.5" fill="#e8f6fd" stroke="#2a8ac8" stroke-width="1.6"/><path d="M1214.5 315 L1222 322.5" stroke="#aaa" stroke-width="3" stroke-linecap="round"/><path d="M1205 309.5 H1213" stroke="#1e5f90" stroke-width="2.2"/><rect x="1238.5" y="301.5" width="23" height="22" fill="#5ab0d8" stroke="#999" stroke-width="1.2"/><path d="M1239 303 H1255 Q1245 305 1239 315 Z" fill="#fff"/><path d="M1244 321 L1258 308" stroke="#1e5f90" stroke-width="1.8"/><path d="M1277 306 L1282 301.5 H1299 V317 L1294 322 H1277 Z" fill="#a9d8ef" stroke="#1f70a8" stroke-width="1.8"/><rect x="1277" y="306" width="17" height="16" fill="#fff" stroke="#1f70a8" stroke-width="1.8"/><path d="M1294 306 L1299 301.5" stroke="#1f70a8" stroke-width="1.8"/><path d="M1300 324 h-4 l4 -4z" fill="#666"/><path d="M1315 307 L1320 301.5 H1332 L1337 307 V322 H1315 Z" fill="#e9e9e9" stroke="#c8c8c8"/><rect x="1327" y="311" width="8" height="11" fill="#d9d9d9"/><path d="M1338 324 h-4 l4 -4z" fill="#666"/><path d="M1352 302 L1358 308 M1358 302 L1352 308" stroke="#7d5a1e" stroke-width="1.7"/><path d="M1363 302 L1361 307 M1360 311 L1357 318 M1355 322 L1353 326" stroke="#8a6a2a" stroke-width="1.8"/><path d="M1362 319 V310 M1362 319 H1371 M1362 319 L1357 324" stroke="#7d5a1e" stroke-width="1.5"/><path d="M1376 324 h-4 l4 -4z" fill="#666"/></svg>
<div style="position:absolute;left:1567px;top:827.5px;width:276px;height:69px;background:#ffffff;border:1px solid #b9d3e3;box-sizing:border-box;box-shadow:2px 2px 3px rgba(0,0,0,0.35)"></div>
<span class="t" style="transform:scaleX(0.9969);left:1580px;top:843.03px;font-size:16.2px;color:#333;font-weight:400;">Datum_Tag_A(SET_DATUM_TAG)</span>
<span class="t" style="transform:scaleX(1.0811);left:1580px;top:867.93px;font-size:16.2px;color:#333;font-weight:400;">Duplicated label.</span>
<span class="t" style="transform:scaleX(0.9085);left:596.25px;top:1037.38px;font-size:12.5px;color:#74716c;font-weight:400;">SCALE : 2:1</span>
<span class="t" style="transform:scaleX(0.9300);left:690px;top:1037.38px;font-size:12.5px;color:#74716c;font-weight:400;">TYPE : PART</span>
<span class="t" style="transform:scaleX(0.9153);left:776px;top:1037.38px;font-size:12.5px;color:#74716c;font-weight:400;">NAME : 48005447</span>
<span class="t" style="transform:scaleX(0.9136);left:885.5px;top:1037.38px;font-size:12.5px;color:#74716c;font-weight:400;">SIZE : A2</span>
<span class="t" style="transform:scaleX(0.9295);left:949.5px;top:1037.38px;font-size:12.5px;color:#74716c;font-weight:400;">SHEET 1  OF 2</span>
<span class="t" style="transform:scaleX(0.9921);left:1646.5px;top:989.02px;font-size:11.5px;color:#74716c;font-weight:400;">X.X</span>
<span class="t" style="transform:scaleX(1.0412);left:1641.2px;top:1001.02px;font-size:11.5px;color:#74716c;font-weight:400;">X.XX</span>
<span class="t" style="transform:scaleX(1.0032);left:1637.3px;top:1013.73px;font-size:11.5px;color:#74716c;font-weight:400;">X.XXX</span>
<span class="t" style="transform:scaleX(0.9956);left:1639.4px;top:1025.72px;font-size:11.5px;color:#74716c;font-weight:400;">ANG.</span>
<span class="t" style="transform:scaleX(0.9756);left:1675.5px;top:989.02px;font-size:11.5px;color:#74716c;font-weight:400;">+-0.2</span>
<span class="t" style="transform:scaleX(0.9260);left:1675.5px;top:1001.02px;font-size:11.5px;color:#74716c;font-weight:400;">+-0.01</span>
<span class="t" style="transform:scaleX(0.9917);left:1675.5px;top:1013.73px;font-size:11.5px;color:#74716c;font-weight:400;">+-0.005</span>
<span class="t" style="transform:scaleX(0.9606);left:1675.5px;top:1025.72px;font-size:11.5px;color:#74716c;font-weight:400;">+-1.0</span>
<div style="position:absolute;left:582px;top:1057px;width:141px;height:33px;background:#dedede;border:1px solid #8f8f8f;box-sizing:border-box"></div>
<div style="position:absolute;left:692px;top:1058px;width:31px;height:27px;background:#e6e6e6;border:1px solid #8f8f8f;box-sizing:border-box"></div>
<div style="position:absolute;left:722.5px;top:1057px;width:81px;height:33px;background:#f3f3f3;"></div>
<div style="position:absolute;left:803px;top:1057px;width:103px;height:33px;background:#dedede;border:1px solid #8f8f8f;box-sizing:border-box"></div>
<div style="position:absolute;left:906px;top:1057px;width:1014px;height:1px;background:#8f8f8f;"></div>
<svg style="position:absolute;left:0;top:0" width="1920" height="1200"><path d="M588.5 1071.5 L596.5 1066 V1077 Z M596 1071.5 L604 1066 V1077 Z" fill="#5c5c5c"/><path d="M617 1071.5 L628 1064.5 V1078.5 Z" fill="#a8a8a8"/><path d="M640 1064.5 L651 1071.5 L640 1078.5 Z" fill="#a8a8a8"/><path d="M664 1066 L672 1071.5 L664 1077 Z M671.5 1066 L679.5 1071.5 L671.5 1077 Z" fill="#5c5c5c"/><path d="M701.5 1072 H714 M707.75 1066 V1078" stroke="#444" stroke-width="2.2"/></svg>
<span class="t" style="transform:scaleX(0.9093);left:733.75px;top:1064.02px;font-size:18.8px;color:#2e2e2e;font-weight:700;">Sheet 1</span>
<span class="t" style="transform:scaleX(0.8880);left:827.5px;top:1064.02px;font-size:18.8px;color:#444;font-weight:400;">Sheet 2</span>
<div style="position:absolute;left:9px;top:1098px;width:32px;height:36px;background:#e0e3e5;border:1px solid #b5bcc0;box-sizing:border-box"></div>
<div style="position:absolute;left:130px;top:1096px;width:1px;height:38px;background:#a9aeb1;"></div>
<div style="position:absolute;left:1248px;top:1096px;width:1px;height:38px;background:#a9aeb1;"></div>
<div style="position:absolute;left:1351px;top:1096px;width:1px;height:38px;background:#a9aeb1;"></div>
<div style="position:absolute;left:1403px;top:1096px;width:1px;height:38px;background:#a9aeb1;"></div>
<div style="position:absolute;left:1473px;top:1096px;width:1px;height:38px;background:#a9aeb1;"></div>
<div style="position:absolute;left:0px;top:1090px;width:1920px;height:1px;background:#a0aaad;"></div>
<div style="position:absolute;left:0px;top:1091px;width:1920px;height:1px;background:#d5dcde;"></div>
<svg style="position:absolute;left:0;top:0" width="1920" height="1200"><rect x="13.5" y="1104.5" width="23" height="21" fill="#fafafa" stroke="#666" stroke-width="1.2"/><rect x="13.5" y="1104.5" width="23" height="3" fill="#ddd" stroke="#666" stroke-width="1.2"/><rect x="13.5" y="1110" width="7" height="17" fill="#dce8ee" stroke="#2a6f9a" stroke-width="1.2"/><ellipse cx="30" cy="1124" rx="6" ry="3.5" fill="#444"/><circle cx="30" cy="1124" r="1.5" fill="#fff"/><circle cx="63" cy="1115.5" r="9.5" fill="url(#gglobe)"/><ellipse cx="63" cy="1115.5" rx="13" ry="5.5" transform="rotate(-40 63 1115.5)" fill="none" stroke="#555" stroke-width="1.4"/><defs><linearGradient id="gsq" x1="0" y1="0" x2="0" y2="1"><stop offset="0" stop-color="#fff"/><stop offset="1" stop-color="#cfdde6"/></linearGradient></defs><rect x="89.8" y="1104.8" width="22.5" height="22.5" rx="1.5" fill="url(#gsq)" stroke="#2a6f9a" stroke-width="1.4"/><circle cx="143.7" cy="1112.8" r="4" fill="#1e6b9a"/><path d="M1273 1104.5 L1284.5 1126.5 H1261.5 Z" fill="#ffe500" stroke="#333" stroke-width="1.3" stroke-linejoin="round"/><path d="M1273 1111 V1119" stroke="#111" stroke-width="2.6"/><circle cx="1273" cy="1122.5" r="1.4" fill="#111"/><circle cx="1367" cy="1115.5" r="7.6" fill="#44cc44"/><circle cx="1381.7" cy="1115.5" r="4" fill="#cfcfcf"/><circle cx="1392.3" cy="1115.5" r="4" fill="#cfcfcf"/><rect x="1407.5" y="1098.5" width="62" height="35" fill="#f9fbfc" stroke="#c8ced1"/><path d="M1448.5 1099 V1133" stroke="#c8ced1"/><path d="M1454 1112.5 H1464 L1459 1118 Z" fill="#555"/><defs><linearGradient id="gbin" x1="0" y1="0" x2="1" y2="0"><stop offset="0" stop-color="#3a3a3a"/><stop offset="0.45" stop-color="#d0d0d0"/><stop offset="1" stop-color="#2a2a2a"/></linearGradient></defs><rect x="1421" y="1105.5" width="4" height="6" fill="#444"/><rect x="1430" y="1105.5" width="4" height="6" fill="#444"/><path d="M1418 1127.5 V1117 Q1418 1111 1422 1110 H1426 V1127.5 Z" fill="url(#gbin)"/><path d="M1429 1127.5 V1110 H1433 Q1437.5 1111 1437.5 1117 V1127.5 Z" fill="url(#gbin)"/><rect x="1425" y="1113" width="5" height="6" fill="#555"/><rect x="1623.5" y="1098.5" width="269" height="35" fill="#f6f8f9" stroke="#c8ced1"/><path d="M1869.5 1099 V1133" stroke="#c8ced1"/><path d="M1875 1112.5 H1886 L1880.5 1118.5 Z" fill="#555"/></svg>
<span class="t" style="transform:scaleX(0.9316);left:155.4px;top:1105.97px;font-size:16.5px;color:#3a3a3a;font-weight:400;">Upload succeeded: 48005447.drw. See the Event Management console for details.</span>
<div style="position:absolute;left:221px;top:1140px;width:66px;height:60px;background:#3d3d3d;"></div>
<div style="position:absolute;left:287px;top:1140px;width:7px;height:60px;background:#2a2a2a;"></div>
<div style="position:absolute;left:221px;top:1197px;width:66px;height:3px;background:#a3a3a3;"></div>
<div style="position:absolute;left:289px;top:1197px;width:5px;height:3px;background:#a3a3a3;"></div>
<div style="position:absolute;left:302px;top:1197px;width:61px;height:3px;background:#a3a3a3;"></div>
<div style="position:absolute;left:452px;top:1197px;width:61px;height:3px;background:#a3a3a3;"></div>
<div style="position:absolute;left:602px;top:1197px;width:61px;height:3px;background:#a3a3a3;"></div>
<div style="position:absolute;left:677px;top:1197px;width:61px;height:3px;background:#a3a3a3;"></div>
<div style="position:absolute;left:752px;top:1197px;width:61px;height:3px;background:#a3a3a3;"></div>
<div style="position:absolute;left:902px;top:1197px;width:61px;height:3px;background:#a3a3a3;"></div>
<div style="position:absolute;left:1052px;top:1197px;width:47px;height:3px;background:#a3a3a3;"></div>
<div style="position:absolute;left:1127px;top:1197px;width:61px;height:3px;background:#a3a3a3;"></div>
<div style="position:absolute;left:1202px;top:1197px;width:61px;height:3px;background:#a3a3a3;"></div>
<div style="position:absolute;left:1099px;top:1197px;width:14px;height:3px;background:#6a6a6a;"></div>
<div style="position:absolute;left:1912px;top:1140px;width:2px;height:60px;background:#5a5a5a;"></div>
<svg style="position:absolute;left:0;top:0" width="1920" height="1200"><path d="M24 1160.5 L34.5 1159 V1169 H24 Z M36.5 1158.7 L48.5 1157 V1169 H36.5 Z M24 1171 H34.5 V1181 L24 1179.5 Z M36.5 1171 H48.5 V1182.5 L36.5 1181 Z" fill="#fff"/><circle cx="108.5" cy="1166" r="11.5" fill="none" stroke="#fff" stroke-width="2.4"/><path d="M100.5 1174.5 L92.5 1184" stroke="#fff" stroke-width="2.8" stroke-linecap="round"/><path d="M168 1158.5 H183.5 M168 1180.5 H183.5 M168 1156.5 V1160.5 M168 1178.5 V1182.5 M183.5 1156.5 V1160.5 M183.5 1178.5 V1182.5" stroke="#fff" stroke-width="1.6" fill="none"/><rect x="168.5" y="1163" width="14.5" height="12.5" fill="none" stroke="#fff" stroke-width="1.6"/><path d="M190.5 1157 V1182" stroke="#fff" stroke-width="1.6"/><rect x="188.5" y="1164.5" width="4" height="4" fill="#fff"/><rect x="239.5" y="1152" width="35" height="35.5" fill="#fff"/><rect x="243.5" y="1157" width="26" height="25" fill="#d4d4d4" stroke="#666" stroke-width="1"/><rect x="253" y="1157" width="16.5" height="15.5" fill="#0a96e6"/><path d="M253 1157 V1172.5 H269.5" stroke="#555" fill="none" stroke-width="1"/><circle cx="343.5" cy="1158" r="4.5" fill="#7b83eb"/><circle cx="333" cy="1156.5" r="6" fill="#7b83eb"/><rect x="328" y="1162" width="22" height="17" rx="6" fill="#5059c9"/><rect x="314" y="1161" width="19" height="19" rx="2" fill="#4b53bc"/><text x="318.5" y="1176" font-family="Liberation Sans" font-weight="bold" font-size="14" fill="#fff">T</text><rect x="326" y="1180" width="6" height="6" fill="#33d6e6"/><circle cx="341" cy="1179" r="12" fill="#1aa01a"/><path d="M335.5 1179 L339.5 1183 L347 1175.5" stroke="#fff" stroke-width="2.4" fill="none"/><rect x="397" y="1154" width="27.5" height="33.5" rx="2" fill="#ca64ea"/><path d="M411 1164 H424.5 V1187 H411 Z" fill="#ae4bd5"/><path d="M417 1170 H424.5 V1187 H417 Z" fill="#7719aa" opacity="0.6"/><rect x="389" y="1161" width="18.5" height="18.5" rx="2" fill="#7719aa"/><text x="392" y="1175.5" font-family="Liberation Sans" font-weight="bold" font-size="13.5" fill="#fff">N</text><defs><linearGradient id="gpdf" x1="0" y1="0" x2="0" y2="1"><stop offset="0" stop-color="#e3262a"/><stop offset="1" stop-color="#9c1416"/></linearGradient></defs><rect x="464" y="1152" width="36" height="35.5" rx="3" fill="url(#gpdf)"/><text x="466.5" y="1164" font-family="Liberation Sans" font-size="9.5" fill="#fff">PDF</text><path d="M478 1184 L497 1166 M483 1184 L499 1170" stroke="#fff" stroke-width="2.4"/><path d="M476 1185 L478 1178 L483 1182 Z" fill="#fff"/><circle cx="557" cy="1170" r="18" fill="#db4437"/><path d="M557 1170 L541.4 1179 A18 18 0 0 1 557 1152 Z" fill="#db4437"/><path d="M557 1170 L541.4 1179 A18 18 0 0 0 572.6 1179 Z" fill="#0f9d58"/><path d="M557 1170 L572.6 1179 A18 18 0 0 0 557 1152 H557 Z" fill="#f4b400"/><path d="M557 1152 A18 18 0 0 1 572.6 1161 L557 1170 Z" fill="#db4437"/><circle cx="557" cy="1170" r="8.2" fill="#fff"/><circle cx="557" cy="1170" r="6.5" fill="#4285f4"/><defs><linearGradient id="gedge" x1="0" y1="0" x2="1" y2="1"><stop offset="0" stop-color="#35c1f1"/><stop offset="0.6" stop-color="#1d9bd8"/><stop offset="1" stop-color="#66e07a"/></linearGradient></defs><circle cx="632" cy="1170" r="18" fill="url(#gedge)"/><path d="M618 1178 Q622 1162 640 1166 Q648 1172 642 1178 Q630 1184 624 1175" fill="#1c1c1c"/><circle cx="632" cy="1170" r="5" fill="#1c1c1c"/><path d="M632 1188 Q646 1188 650 1177 Q640 1186 630 1182 Z" fill="#1a5aa8"/><rect x="614" y="1173" width="18" height="14" rx="1.5" fill="#e08a14"/><rect x="620" y="1170.5" width="6" height="3" fill="none" stroke="#e08a14" stroke-width="1.5"/><rect x="622" y="1179" width="2" height="2" fill="#5a3a00"/><path d="M691 1159 Q691 1157 693 1157 H703 L706 1160 H721 Q723.5 1160 723.5 1162 V1181 Q723.5 1183 721 1183 H693 Q691 1183 691 1181 Z" fill="#ffc83d"/><path d="M691 1163 H723.5 V1181 Q723.5 1183 721 1183 H693 Q691 1183 691 1181 Z" fill="#ffd767"/><path d="M699 1183 V1173 H715.5 V1183 H711 V1177 H703.5 V1183 Z" fill="#1e88e5"/><rect x="775" y="1154" width="24.5" height="33.5" rx="2" fill="#0a64c8"/><path d="M787 1154 H799.5 V1166 H787 Z" fill="#28a8ea"/><path d="M775 1170 L787.5 1179 L799.5 1170 V1185 Q799.5 1187.5 797 1187.5 H777.5 Q775 1187.5 775 1185 Z" fill="#1490df"/><rect x="764" y="1161" width="19" height="19" rx="2" fill="#0a5fb4"/><text x="767" y="1175.5" font-family="Liberation Sans" font-weight="bold" font-size="14" fill="#fff">O</text><rect x="846" y="1154" width="28.5" height="33.5" rx="2" fill="#185abd"/><path d="M846 1154 H874.5 V1165 H846 Z" fill="#41a5ee"/><path d="M846 1165 H874.5 V1176 H846 Z" fill="#2b7cd3"/><rect x="839" y="1161" width="19" height="19" rx="2" fill="#185abd"/><text x="840" y="1175.5" font-family="Liberation Sans" font-weight="bold" font-size="13.5" fill="#fff">W</text><rect x="921" y="1154" width="28.5" height="33.5" rx="2" fill="#107c41"/><path d="M935 1154 H949.5 V1165 H935 Z" fill="#33c481"/><path d="M935 1165 H949.5 V1176 H935 Z" fill="#21a366"/><rect x="914" y="1161" width="19" height="19" rx="2" fill="#107c41"/><text x="918" y="1175.5" font-family="Liberation Sans" font-weight="bold" font-size="13.5" fill="#fff">X</text><circle cx="1007.5" cy="1170.5" r="17" fill="#ed6c47"/><path d="M1007.5 1153.5 A17 17 0 0 1 1024.5 1170.5 H1007.5 Z" fill="#ff8f6b"/><path d="M1007.5 1170.5 H1024.5 A17 17 0 0 1 1007.5 1187.5 Z" fill="#d35230"/><rect x="989" y="1161" width="19" height="19" rx="2" fill="#c43e1c"/><text x="993.5" y="1175.5" font-family="Liberation Sans" font-weight="bold" font-size="13.5" fill="#fff">P</text><rect x="1066" y="1154" width="32.5" height="32.5" rx="1.5" fill="#ffd20a"/><path d="M1082 1186.5 V1174 Q1082 1170 1086 1170 H1098.5 L1082 1186.5 Z" fill="#3a3a3a"/><path d="M1098.5 1170 V1185 Q1098.5 1186.5 1097 1186.5 H1082 Z" fill="#f0b400"/><rect x="1143" y="1152" width="28" height="36" rx="2.5" fill="#5d6a75"/><rect x="1146" y="1155" width="22" height="5.5" fill="#4fd0f7"/><g fill="#c9d1d8"><rect x="1146" y="1163.5" width="5" height="5"/><rect x="1154" y="1163.5" width="5" height="5"/><rect x="1162" y="1163.5" width="5" height="5"/><rect x="1146" y="1171.5" width="5" height="5"/><rect x="1154" y="1171.5" width="5" height="5"/><rect x="1146" y="1179.5" width="5" height="5"/><rect x="1154" y="1179.5" width="5" height="5"/></g><rect x="1162" y="1171.5" width="5" height="13" fill="#0d4f8c"/><defs><linearGradient id="gsn" x1="0" y1="0" x2="0" y2="1"><stop offset="0" stop-color="#4f9fdc"/><stop offset="1" stop-color="#2a6fb8"/></linearGradient></defs><rect x="1214" y="1152" width="36" height="36" rx="3" fill="url(#gsn)"/><path d="M1243 1160 H1227 Q1221 1160 1221 1166 Q1221 1171 1227 1171 H1237 Q1243 1171 1243 1176 Q1243 1181 1237 1181 H1221" stroke="#fff" stroke-width="5" fill="none"/><path d="M1565 1175 L1573.5 1166.5 L1582 1175" stroke="#fff" stroke-width="1.6" fill="none"/><path d="M1601 1179 Q1597.5 1179 1597.5 1175.5 Q1597.5 1172 1601.5 1172 Q1603 1166 1609.5 1166.5 Q1614.5 1167 1616 1171.5 Q1621.5 1171.5 1621.5 1175.5 Q1621.5 1179 1618 1179 Z" fill="#1e90ff"/><rect x="1636" y="1166" width="21" height="11" rx="1" fill="none" stroke="#fff" stroke-width="1.5"/><rect x="1657" y="1169" width="2" height="5" fill="#fff"/><path d="M1634 1160 V1168 M1638 1160 V1164 M1634 1164 H1638" stroke="#fff" stroke-width="1.4"/><path d="M1675 1175 A17 17 0 0 1 1692 1158 M1679 1175 A13 13 0 0 1 1692 1162 M1683 1175 A9 9 0 0 1 1692 1166 M1687 1175 A5 5 0 0 1 1692 1170" stroke="#fff" stroke-width="1.3" fill="none"/><circle cx="1691" cy="1175" r="1.4" fill="#fff"/><path d="M1707.5 1166 H1712 L1718 1160.5 V1180.5 L1712 1175 H1707.5 Z" stroke="#fff" stroke-width="1.4" fill="none"/><path d="M1721 1166 Q1723.5 1170.5 1721 1175 M1724.5 1163 Q1729 1170.5 1724.5 1178" stroke="#fff" stroke-width="1.4" fill="none"/><path d="M1858 1159 H1881 V1176 H1866 L1862 1180 V1176 H1858 Z" fill="#fff"/><path d="M1862 1164 H1877 M1862 1168 H1877 M1862 1172 H1873" stroke="#1c1c1c" stroke-width="1.4"/><circle cx="1880.5" cy="1181.5" r="13" fill="#1c1c1c" stroke="#8a8a8a" stroke-width="1.2"/></svg>
<span class="t" style="transform:scaleX(0.9787);left:1755.2px;top:1148.03px;font-size:17.5px;color:#ffffff;font-weight:400;">3:46 PM</span>
<span class="t" style="transform:scaleX(1.0686);left:1746.4px;top:1176.03px;font-size:17.5px;color:#ffffff;font-weight:400;">5/31/2024</span>
<span class="t" style="transform:scaleX(1.0532);left:1871px;top:1175.67px;font-size:14.5px;color:#ffffff;font-weight:700;">16</span></body></html>
